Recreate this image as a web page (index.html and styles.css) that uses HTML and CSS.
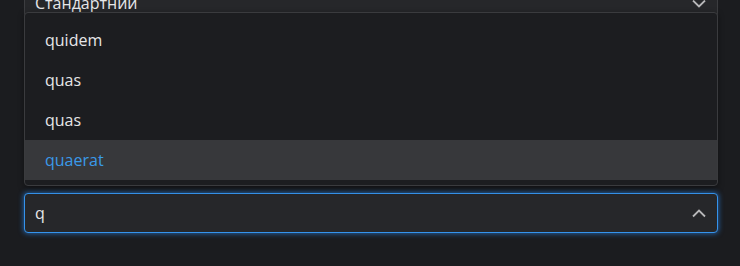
FILE: index.html
```html
<!DOCTYPE html>
<html>
<head>
<meta charset="utf-8">
<link rel="stylesheet" href="styles.css">
</head>
<body>
<div class="form">
  <div class="field select">
    <span class="value">Стандартний</span>
    <svg class="chev" width="14" height="9" viewBox="0 0 14 9"><path d="M1 1.5 L7 7.5 L13 1.5" fill="none" stroke="#b8b8ba" stroke-width="1.8"/></svg>
  </div>
  <div class="combo">
    <ul class="menu">
      <li class="item">quidem</li>
      <li class="item">quas</li>
      <li class="item">quas</li>
      <li class="item active">quaerat</li>
    </ul>
    <div class="field input">
      <span class="value">q</span>
      <svg class="chev" width="14" height="9" viewBox="0 0 14 9"><path d="M1 7.5 L7 1.5 L13 7.5" fill="none" stroke="#b8b8ba" stroke-width="1.8"/></svg>
    </div>
  </div>
</div>
</body>
</html>
```
FILE: styles.css
```css
html, body {
  margin: 0;
  padding: 0;
  background: #1b1c1f;
  height: 100%;
  overflow: hidden;
}
body {
  font-family: "Open Sans", "Noto Sans", sans-serif;
  font-size: 16px;
  color: #e6e6e8;
}
.form {
  display: flex;
  flex-direction: column;
  gap: 169px;
  padding: 0 22px 0 24px;
  margin-top: -17px;
}
.field {
  box-sizing: border-box;
  height: 40px;
  display: flex;
  align-items: center;
  justify-content: space-between;
  padding: 0 11px 0 10px;
  background: #26272a;
  border: 1px solid #3c3d40;
  border-radius: 4px;
}
.field .value {
  line-height: 20px;
}
.combo {
  position: relative;
  margin-top: 1px;
}
.input {
  border-color: #3593ec;
  box-shadow: 0 0 5px 1px rgba(40, 130, 230, 0.6);
}
.menu {
  position: absolute;
  left: 0;
  right: 0;
  bottom: calc(100% + 7px);
  margin: 0;
  padding: 7px 0 5px;
  list-style: none;
  background: #1c1d20;
  border: 1px solid #3a3b3e;
  border-radius: 4px;
  box-shadow: 0 2px 6px rgba(0, 0, 0, 0.4);
  z-index: 2;
}
.item {
  height: 40px;
  display: flex;
  align-items: center;
  padding-left: 20px;
  color: #e6e6e8;
}
.item.active {
  background: #37383b;
  color: #3a9ae9;
}
```
